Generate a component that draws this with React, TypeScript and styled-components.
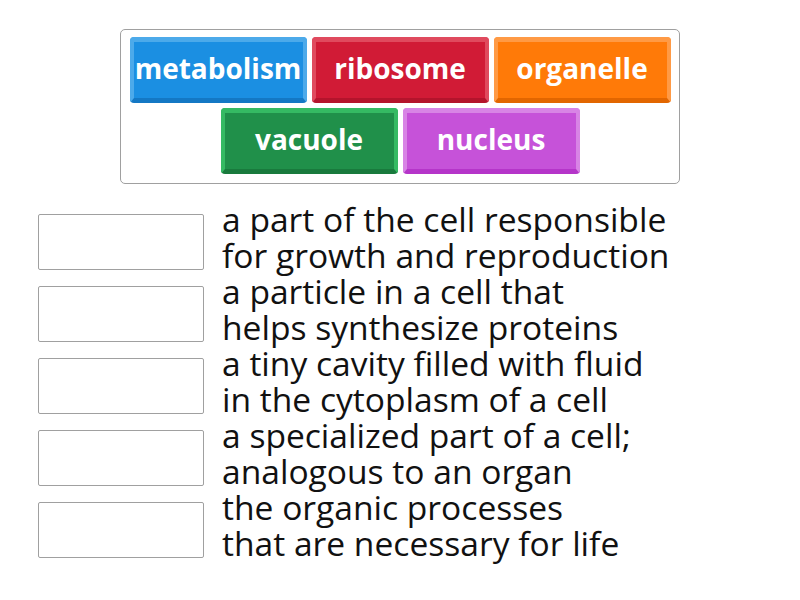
import styled, { createGlobalStyle } from "styled-components";

const GlobalStyle = createGlobalStyle`
  body {
    margin: 0;
    background: #fff;
    font-family: "Open Sans", "Noto Sans", sans-serif;
  }
`;

const Page = styled.div`
  width: 800px;
  height: 600px;
  padding-top: 29px;
  box-sizing: border-box;
  display: flex;
  flex-direction: column;
  align-items: flex-start;
`;

const Bank = styled.div`
  margin-left: 120px;
  width: 560px;
  height: 155px;
  box-sizing: border-box;
  border: 1px solid #a0a0a0;
  border-radius: 5px;
  padding: 7px 8px 8px 8px;
  display: flex;
  flex-wrap: wrap;
  justify-content: center;
  align-content: flex-start;
  gap: 5px;
`;

interface Palette {
  face: string;
  edge: string;
  base: string;
}

const palettes: Record<string, Palette> = {
  blue: { face: "#1b8fe2", edge: "#4caaea", base: "#1478c4" },
  red: { face: "#d11b36", edge: "#e04a5e", base: "#b4142c" },
  orange: { face: "#ff7a08", edge: "#ff9a45", base: "#e26600" },
  green: { face: "#20904a", edge: "#35ba63", base: "#197a3d" },
  purple: { face: "#c652d9", edge: "#d884e5", base: "#b535c9" },
};

const Tile = styled.div<{ $c: Palette }>`
  width: 177px;
  height: 66px;
  box-sizing: border-box;
  border-radius: 4px;
  border: 4px solid ${(p) => p.$c.edge};
  border-top-width: 5px;
  border-bottom: 5px solid ${(p) => p.$c.base};
  background: ${(p) => p.$c.face};
  display: flex;
  align-items: center;
  justify-content: center;
  color: #fff;
  font-weight: 700;
  font-size: 28px;
  white-space: nowrap;
  padding-bottom: 4px;
`;

const List = styled.div`
  margin-top: 17px;
  margin-left: 38px;
  display: flex;
  flex-direction: column;
`;

const Row = styled.div`
  display: flex;
  align-items: center;
  height: 72px;
`;

const Slot = styled.div`
  width: 166px;
  height: 56px;
  box-sizing: border-box;
  border: 1px solid #a0a0a0;
  border-radius: 2px;
  margin-top: 10px;
  flex-shrink: 0;
`;

const Clue = styled.div`
  margin-left: 18px;
  font-size: 33.6px;
  line-height: 36.2px;
  color: #111;
  white-space: nowrap;
`;

const tiles = [
  { word: "metabolism", c: palettes.blue },
  { word: "ribosome", c: palettes.red },
  { word: "organelle", c: palettes.orange },
  { word: "vacuole", c: palettes.green },
  { word: "nucleus", c: palettes.purple },
];

const clues = [
  ["a part of the cell responsible", "for growth and reproduction"],
  ["a particle in a cell that", "helps synthesize proteins"],
  ["a tiny cavity filled with fluid", "in the cytoplasm of a cell"],
  ["a specialized part of a cell;", "analogous to an organ"],
  ["the organic processes", "that are necessary for life"],
];

export default function App() {
  return (
    <>
      <GlobalStyle />
      <Page>
        <Bank>
          {tiles.map((t) => (
            <Tile key={t.word} $c={t.c}>
              {t.word}
            </Tile>
          ))}
        </Bank>
        <List>
          {clues.map((lines, i) => (
            <Row key={i}>
              <Slot />
              <Clue>
                {lines[0]}
                <br />
                {lines[1]}
              </Clue>
            </Row>
          ))}
        </List>
      </Page>
    </>
  );
}
